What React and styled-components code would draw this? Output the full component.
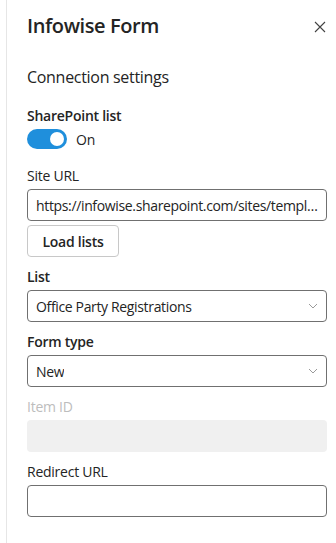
import React from 'react';
import styled, {createGlobalStyle} from 'styled-components';

const GlobalStyle = createGlobalStyle`
  html, body {
    margin: 0;
    padding: 0;
    background: #ffffff;
  }
  body {
    font-family: "Open Sans", "Noto Sans", sans-serif;
    color: #242424;
  }
`;

const Page = styled.div`
  display: flex;
  width: 336px;
  height: 543px;
  overflow: hidden;
`;

const Gutter = styled.div`
  width: 6px;
  flex: none;
  border-right: 1px solid #e6e6e6;
`;

const Panel = styled.div`
  flex: 1;
  min-width: 0;
  padding: 12px 9px 0 20px;
  display: flex;
  flex-direction: column;
`;

const Header = styled.div`
  display: flex;
  align-items: center;
  justify-content: space-between;
  height: 28px;
`;

const Title = styled.h1`
  margin: 0;
  font-size: 20px;
  line-height: 28px;
  font-weight: 600;
  letter-spacing: -0.4px;
  color: #242424;
`;

const CloseButton = styled.button`
  border: none;
  background: none;
  padding: 0;
  width: 20px;
  height: 20px;
  display: flex;
  align-items: center;
  justify-content: center;
  margin-right: -3px;
  margin-top: 2px;
`;

const Section = styled.h2`
  margin: 26px 0 0;
  font-size: 16px;
  line-height: 22px;
  font-weight: 400;
  letter-spacing: -0.3px;
  color: #242424;
`;

const Field = styled.div`
  display: flex;
  flex-direction: column;
  min-width: 0;
  margin-top: ${p => p.$top || 10}px;
`;

const Label = styled.label`
  font-size: 14px;
  line-height: 20px;
  font-weight: ${p => (p.$strong ? 600 : 400)};
  letter-spacing: -0.25px;
  color: ${p => (p.$disabled ? '#bdbdbd' : '#242424')};
  margin-bottom: 3px;
`;

const SwitchRow = styled.div`
  display: flex;
  align-items: center;
  gap: 9px;
  height: 20px;
  font-size: 14px;
  letter-spacing: -0.25px;
`;

const Track = styled.span`
  position: relative;
  width: 40px;
  height: 20px;
  border-radius: 10px;
  background: #1f8fdc;
`;

const Thumb = styled.span`
  position: absolute;
  right: 3px;
  top: 3px;
  width: 14px;
  height: 14px;
  border-radius: 50%;
  background: #ffffff;
`;

const Box = styled.div`
  box-sizing: border-box;
  width: 100%;
  min-width: 0;
  height: 32px;
  border-radius: 4px;
  border: 1px solid ${p => (p.$disabled ? 'transparent' : '#707070')};
  background: ${p => (p.$disabled ? '#f0f0f0' : '#ffffff')};
  display: flex;
  align-items: center;
  justify-content: space-between;
  gap: 8px;
  padding: 0 8px 0 8px;
  font-size: 14px;
  letter-spacing: -0.35px;
  white-space: nowrap;
  overflow: hidden;
`;

const BoxText = styled.span`
  min-width: 0;
  overflow: hidden;
  text-overflow: ellipsis;
`;

const Button = styled.button`
  box-sizing: border-box;
  align-self: flex-start;
  margin-top: 4px;
  height: 32px;
  width: 92px;
  border: 1px solid #c8c8c8;
  border-radius: 4px;
  background: #ffffff;
  font-family: inherit;
  font-size: 14px;
  font-weight: 600;
  letter-spacing: -0.25px;
  color: #242424;
  padding: 0;
`;

const Chevron = () => (
  <svg width="10" height="6" viewBox="0 0 10 6" fill="none" style={{flex: 'none'}}>
    <path d="M1 1l4 4 4-4" stroke="#9a9a9a" strokeWidth="1" />
  </svg>
);

const CloseIcon = () => (
  <svg width="12" height="12" viewBox="0 0 12 12">
    <path d="M1 1l10 10M11 1L1 11" stroke="#424242" strokeWidth="1.1" />
  </svg>
);

const App = () => (
  <Page>
    <GlobalStyle />
    <Gutter />
    <Panel>
      <Header>
        <Title>Infowise Form</Title>
        <CloseButton aria-label="Close">
          <CloseIcon />
        </CloseButton>
      </Header>

      <Section>Connection settings</Section>

      <Field $top={18}>
        <Label $strong>SharePoint list</Label>
        <SwitchRow>
          <Track>
            <Thumb />
          </Track>
          On
        </SwitchRow>
      </Field>

      <Field $top={17}>
        <Label>Site URL</Label>
        <Box>
          <BoxText>https://infowise.sharepoint.com/sites/templates/forms</BoxText>
        </Box>
        <Button>Load lists</Button>
      </Field>

      <Field>
        <Label $strong>List</Label>
        <Box>
          <BoxText>Office Party Registrations</BoxText>
          <Chevron />
        </Box>
      </Field>

      <Field>
        <Label $strong>Form type</Label>
        <Box>
          <BoxText>New</BoxText>
          <Chevron />
        </Box>
      </Field>

      <Field>
        <Label $disabled>Item ID</Label>
        <Box $disabled />
      </Field>

      <Field>
        <Label>Redirect URL</Label>
        <Box />
      </Field>
    </Panel>
  </Page>
);

export default App;
